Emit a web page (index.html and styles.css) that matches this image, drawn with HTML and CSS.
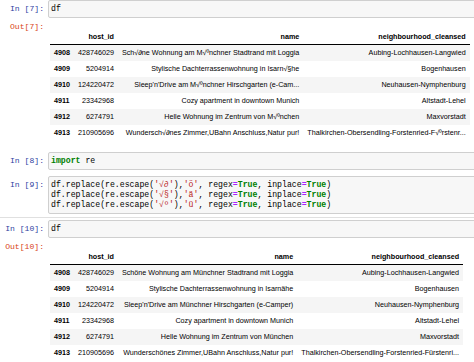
FILE: index.html
```html
<!DOCTYPE html>
<html>
<head>
<meta charset="utf-8">
<link rel="stylesheet" href="styles.css">
</head>
<body>
<div class="nb">
  <div class="cell">
    <div class="prompt in-prompt">In&nbsp;[7]:</div>
    <div class="code">df</div>
  </div>
  <div class="out">
    <div class="prompt out-prompt">Out[7]:</div>
    <div class="out-area">
      <table class="df">
        <thead>
          <tr><th></th><th>host_id</th><th>name</th><th>neighbourhood_cleansed</th></tr>
        </thead>
        <tbody>
          <tr><th>4908</th><td>428746029</td><td>Sch√∂ne Wohnung am M√ºnchner Stadtrand mit Loggia</td><td>Aubing-Lochhausen-Langwied</td></tr>
          <tr><th>4909</th><td>5204914</td><td>Stylische Dachterrassenwohnung in Isarn√§he</td><td>Bogenhausen</td></tr>
          <tr><th>4910</th><td>124220472</td><td>Sleep'n'Drive am M√ºnchner Hirschgarten (e-Cam...</td><td>Neuhausen-Nymphenburg</td></tr>
          <tr><th>4911</th><td>23342968</td><td>Cozy apartment in downtown Munich</td><td>Altstadt-Lehel</td></tr>
          <tr><th>4912</th><td>6274791</td><td>Helle Wohnung im Zentrum von M√ºnchen</td><td>Maxvorstadt</td></tr>
          <tr><th>4913</th><td>210905696</td><td>Wundersch√∂nes Zimmer,UBahn Anschluss,Natur pur!</td><td>Thalkirchen-Obersendling-Forstenried-F√ºrstenr...</td></tr>
        </tbody>
      </table>
    </div>
  </div>

  <div class="cell cell-gap-lg">
    <div class="prompt in-prompt">In&nbsp;[8]:</div>
    <div class="code"><span class="kw">import</span> re</div>
  </div>

  <div class="cell cell-gap-sm">
    <div class="prompt in-prompt">In&nbsp;[9]:</div>
    <div class="code">df.replace(re.escape(<span class="s">'√∂'</span>),<span class="s">'ö'</span>, regex<span class="op">=</span><span class="kw">True</span>, inplace<span class="op">=</span><span class="kw">True</span>)
df.replace(re.escape(<span class="s">'√§'</span>),<span class="s">'ä'</span>, regex<span class="op">=</span><span class="kw">True</span>, inplace<span class="op">=</span><span class="kw">True</span>)
df.replace(re.escape(<span class="s">'√º'</span>),<span class="s">'ü'</span>, regex<span class="op">=</span><span class="kw">True</span>, inplace<span class="op">=</span><span class="kw">True</span>)</div>
  </div>

  <div class="selected">
    <div class="cell">
      <div class="prompt in-prompt">In&nbsp;[10]:</div>
      <div class="code">df</div>
    </div>
    <div class="out">
      <div class="prompt out-prompt">Out[10]:</div>
      <div class="out-area">
        <table class="df">
          <thead>
            <tr><th></th><th>host_id</th><th>name</th><th>neighbourhood_cleansed</th></tr>
          </thead>
          <tbody>
            <tr><th>4908</th><td>428746029</td><td>Schöne Wohnung am Münchner Stadtrand mit Loggia</td><td>Aubing-Lochhausen-Langwied</td></tr>
            <tr><th>4909</th><td>5204914</td><td>Stylische Dachterrassenwohnung in Isarnähe</td><td>Bogenhausen</td></tr>
            <tr><th>4910</th><td>124220472</td><td>Sleep'n'Drive am Münchner Hirschgarten (e-Camper)</td><td>Neuhausen-Nymphenburg</td></tr>
            <tr><th>4911</th><td>23342968</td><td>Cozy apartment in downtown Munich</td><td>Altstadt-Lehel</td></tr>
            <tr><th>4912</th><td>6274791</td><td>Helle Wohnung im Zentrum von München</td><td>Maxvorstadt</td></tr>
            <tr><th>4913</th><td>210905696</td><td>Wunderschönes Zimmer,UBahn Anschluss,Natur pur!</td><td>Thalkirchen-Obersendling-Forstenried-Fürstenri...</td></tr>
          </tbody>
        </table>
      </div>
    </div>
  </div>
</div>
</body>
</html>
```

FILE: styles.css
```css
html, body {
  margin: 0;
  padding: 0;
  background: #ffffff;
}
body {
  width: 474px;
  height: 362px;
  overflow: hidden;
}
.nb {
  width: 474px;
}
.cell {
  display: flex;
  align-items: flex-start;
}
.cell-gap-lg {
  margin-top: 11px;
}
.cell-gap-sm {
  margin-top: 6px;
}
.prompt {
  flex: none;
  width: 48px;
  box-sizing: border-box;
  padding-right: 4px;
  text-align: right;
  font-family: "Liberation Mono", monospace;
  font-size: 8.1px;
  line-height: 10px;
  white-space: nowrap;
}
.in-prompt {
  color: #303f9f;
  padding-top: 4px;
}
.out-prompt {
  color: #d84315;
  padding-top: 4px;
}
.code {
  flex: 1;
  margin-right: -6px;
  background: #f7f7f7;
  border: 1px solid #cfcfcf;
  border-radius: 2px;
  padding: 3px 2px;
  font-family: "Liberation Mono", monospace;
  font-size: 8.2px;
  line-height: 10px;
  color: #000;
  white-space: pre;
}
.kw {
  color: #008000;
  font-weight: bold;
}
.s {
  color: #ba2121;
}
.op {
  color: #aa22ff;
  font-weight: bold;
}
.out {
  display: flex;
  align-items: flex-start;
}
.out-area {
  flex: 1;
  padding-top: 11px;
}
.df {
  margin-left: 2px;
  border-collapse: separate;
  border-spacing: 0;
  font-family: "Liberation Sans", Arial, sans-serif;
  font-size: 7.2px;
  color: #000;
}
.df th, .df td {
  padding: 0 4px;
  line-height: 16px;
  text-align: right;
  white-space: nowrap;
  font-weight: normal;
}
.df th {
  font-weight: bold;
}
.df thead th {
  line-height: 15px;
  border-bottom: 1px solid #000;
}
.df tbody tr:nth-child(odd) {
  background: #f5f5f5;
}
.df tbody th {
  text-align: left;
}
.selected {
  margin-top: 3px;
  border-top: 1px solid #e0e0e0;
  padding-top: 2px;
}
```
